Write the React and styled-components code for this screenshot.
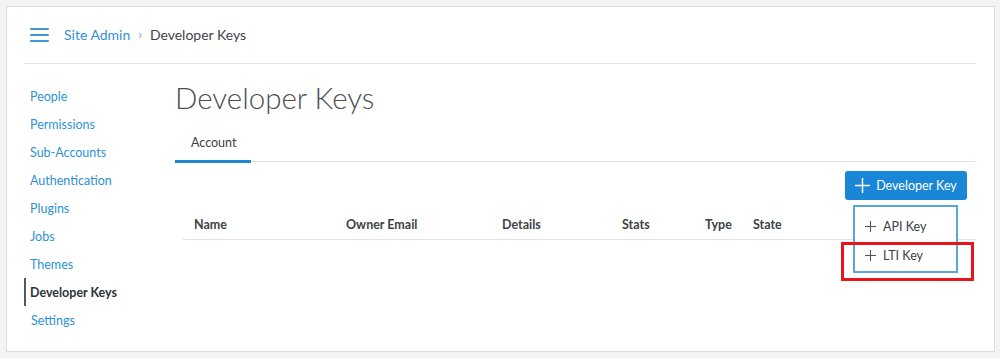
import React from 'react';
import styled, { createGlobalStyle } from 'styled-components';

const Global = createGlobalStyle`
  html, body {
    margin: 0;
    padding: 0;
    background: #f4f4f4;
    font-family: Lato, "Open Sans", "Liberation Sans", sans-serif;
  }
`;

const Frame = styled.div`
  margin: 6px 0 0 6px;
  width: 987px;
  height: 344px;
  background: #fff;
  border: 1px solid #dcdcdc;
  display: flex;
  flex-direction: column;
  overflow: hidden;
`;

const Header = styled.header`
  margin: 0 18px 0 17px;
  height: 56px;
  border-bottom: 1px solid #e3e3e3;
  display: flex;
  align-items: center;
  padding-left: 6px;
  gap: 15px;
`;

const Crumbs = styled.nav`
  display: flex;
  align-items: center;
  gap: 8px;
  font-size: 14px;
  color: #3f4347;
  margin-top: -2px;
`;

const CrumbLink = styled.a`
  color: #2e91d6;
  text-decoration: none;
`;

const Sep = styled.span`
  color: #9aa0a4;
  font-size: 13px;
`;

const Body = styled.div`
  display: flex;
  flex: 1;
`;

const Sidebar = styled.ul`
  list-style: none;
  margin: 0;
  padding: 18px 0 0 17px;
  width: 168px;
  box-sizing: border-box;
`;

const NavItem = styled.li`
  height: 28px;
  display: flex;
  align-items: center;
  padding-left: ${p => (p.$shift ? 5 : 4)}px;
  font-size: 12.5px;
  color: ${p => (p.$active ? '#2d3338' : '#2e91d6')};
  font-weight: ${p => (p.$active ? 700 : 400)};
  border-left: 2px solid ${p => (p.$active ? '#555a5e' : 'transparent')};
`;

const Main = styled.main`
  flex: 1;
  margin-right: 18px;
  padding-top: 17px;
`;

const Title = styled.h1`
  margin: 0;
  font-size: 29.5px;
  line-height: 34px;
  font-weight: 300;
  color: #4b4f54;
`;

const Tabs = styled.div`
  margin-top: 19px;
  border-bottom: 1px solid #e3e3e3;
  display: flex;
`;

const Tab = styled.div`
  padding: 0 15px 8px 16px;
  font-size: 12.5px;
  line-height: 18px;
  color: #3b4045;
  border-bottom: 3px solid ${p => (p.$active ? '#1f86d0' : 'transparent')};
  margin-bottom: -2px;
`;

const Toolbar = styled.div`
  display: flex;
  justify-content: flex-end;
  padding: 9px 9px 0 0;
`;

const MenuAnchor = styled.div`
  position: relative;
`;

const PrimaryButton = styled.button`
  height: 29px;
  width: 122px;
  border: none;
  border-radius: 3px;
  background: #1a86d6;
  color: #fff;
  font-family: inherit;
  font-size: 12.5px;
  display: flex;
  align-items: center;
  justify-content: center;
  gap: 6px;
  padding: 0 8px;
`;

const Menu = styled.div`
  position: absolute;
  top: 34px;
  left: 8px;
  width: 105px;
  height: 68px;
  box-sizing: border-box;
  border: 2px solid #5aa7dc;
  background: #fff;
  padding-top: 5px;
  z-index: 2;
`;

const MenuItem = styled.div`
  height: 29px;
  display: flex;
  align-items: center;
  gap: 7px;
  padding-left: 10px;
  font-size: 12.5px;
  color: #3b4045;
`;

const Highlight = styled.div`
  position: absolute;
  top: 71px;
  left: -4px;
  width: 133px;
  height: 39px;
  box-sizing: border-box;
  border: 3px solid #e8141b;
  z-index: 3;
`;

const Table = styled.div`
  margin: 9px 0 0 8px;
  display: grid;
  grid-template-columns: 152px 156px 120px 83px 48px 1fr;
  height: 30px;
  align-items: center;
  border-bottom: 1px solid #e3e3e3;
`;

const Th = styled.div`
  padding-left: 11px;
  font-size: 12.5px;
  font-weight: 700;
  color: #3d4246;
`;

const Hamburger = () => (
  <svg width="19" height="16" viewBox="0 0 19 16">
    <g stroke="#3c97d7" strokeWidth="2" strokeLinecap="round">
      <line x1="1" y1="2" x2="18" y2="2" />
      <line x1="1" y1="8" x2="18" y2="8" />
      <line x1="1" y1="14" x2="18" y2="14" />
    </g>
  </svg>
);

const Plus = ({ size = 12, color = 'currentColor' }) => (
  <svg width={size} height={size} viewBox="0 0 12 12">
    <g stroke={color} strokeWidth="1.2">
      <line x1="6" y1="0" x2="6" y2="12" />
      <line x1="0" y1="6" x2="12" y2="6" />
    </g>
  </svg>
);

const navItems = ['People', 'Permissions', 'Sub-Accounts', 'Authentication', 'Plugins', 'Jobs', 'Themes', 'Developer Keys', 'Settings'];
const columns = ['Name', 'Owner Email', 'Details', 'Stats', 'Type', 'State'];

export default function App() {
  return (
    <>
      <Global />
      <Frame>
        <Header>
          <Hamburger />
          <Crumbs>
            <CrumbLink>Site Admin</CrumbLink>
            <Sep>›</Sep>
            <span>Developer Keys</span>
          </Crumbs>
        </Header>
        <Body>
          <Sidebar>
            {navItems.map(n => (
              <NavItem key={n} $active={n === 'Developer Keys'} $shift={n === 'Settings'}>{n}</NavItem>
            ))}
          </Sidebar>
          <Main>
            <Title>Developer Keys</Title>
            <Tabs>
              <Tab $active>Account</Tab>
            </Tabs>
            <Toolbar>
              <MenuAnchor>
                <PrimaryButton>
                  <Plus size={15} />
                  Developer Key
                </PrimaryButton>
                <Menu>
                  <MenuItem><Plus size={11} color="#555" />API Key</MenuItem>
                  <MenuItem><Plus size={11} color="#555" />LTI Key</MenuItem>
                </Menu>
                <Highlight />
              </MenuAnchor>
            </Toolbar>
            <Table>
              {columns.map(c => <Th key={c}>{c}</Th>)}
            </Table>
          </Main>
        </Body>
      </Frame>
    </>
  );
}
